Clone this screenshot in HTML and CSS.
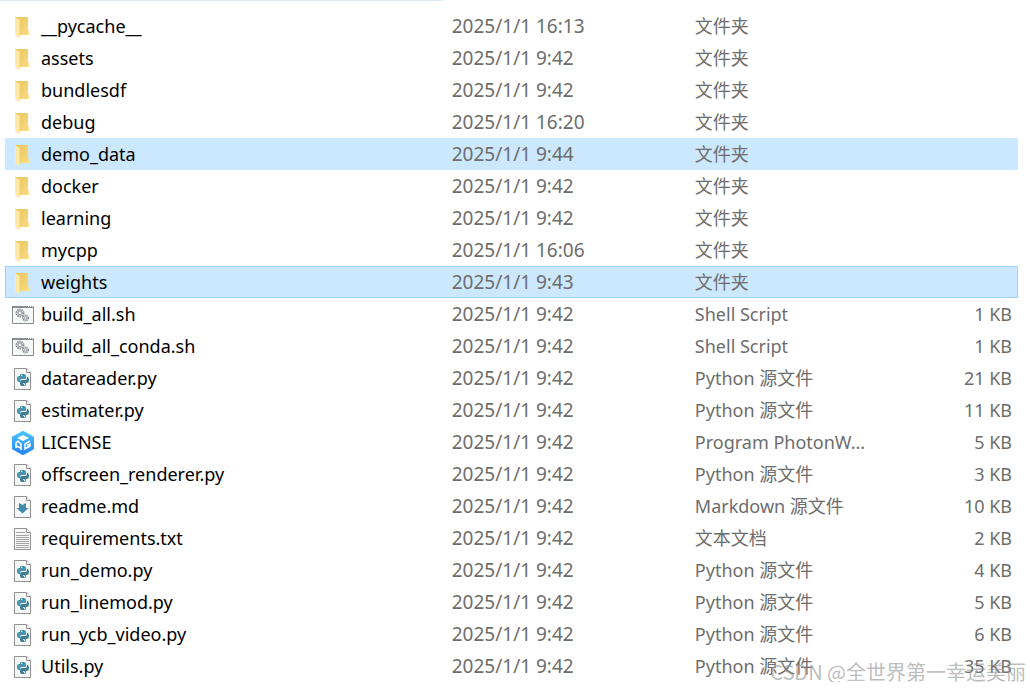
FILE: index.html
```html
<!DOCTYPE html>
<html lang="zh-CN">
<head>
    <meta charset="UTF-8">
    <meta name="viewport" content="width=device-width, initial-scale=1.0">
    <title>文件列表</title>
    <link rel="stylesheet" href="styles.css">
</head>
<body>
    <!-- icon set, every symbol on a 24px grid -->
    <svg class="icon-defs" aria-hidden="true">
        <defs>
            <linearGradient id="folderBack" x1="0" y1="0" x2="1" y2="1">
                <stop offset="0" stop-color="#e9c25c"/>
                <stop offset="1" stop-color="#fbdc82"/>
            </linearGradient>
            <linearGradient id="hexBlue" x1="0" y1="0" x2="0" y2="1">
                <stop offset="0" stop-color="#45c3ff"/>
                <stop offset="1" stop-color="#2b86f5"/>
            </linearGradient>
        </defs>
        <symbol id="folder" viewBox="0 0 24 24">
            <path fill="url(#folderBack)" d="M4 2h13v13l1 1v4H7z"/>
            <path fill="#ffe9a6" d="M4 2l5 3v15l-1 3-4-3z"/>
            <path fill="#f9dc8c" d="M8 5h1v15l-1 3z"/>
        </symbol>
        <symbol id="page" viewBox="0 0 24 24">
            <path fill="#f7f7f7" stroke="#919191" d="M3.500 1.500h12l4 4v17h-16z"/>
            <path fill="#fff" stroke="#919191" d="M15.500 1.500v4h4"/>
        </symbol>
        <symbol id="python" viewBox="0 0 24 24">
            <use href="#page"/>
            <path fill="#4b93b0" d="M9 9V8q0-1 1-1h3q2 0 2 2v2q0 1-1 1h-3q-2 0-2 2v1H8q-2 0-2-2v-2q0-2 2-2h4V9z"/>
            <path fill="#3e7f9c" d="M15 16v1q0 2-2 2h-2q-2 0-2-2v-2q0-2 2-2h3q2 0 2-2v-1q2 0 2 3 0 3-2 3h-4v1z"/>
            <path fill="#fff" d="M10 8h1v1h-1zM13 17h1v1h-1z"/>
        </symbol>
        <symbol id="markdown" viewBox="0 0 24 24">
            <use href="#page"/>
            <path fill="#4389aa" d="M8 8l3.500 2L15 8v5h2.500l-6 5.500-6-5.500H8z"/>
        </symbol>
        <symbol id="text" viewBox="0 0 24 24">
            <use href="#page"/>
            <path stroke="#a3a3a3" d="M5 5.500h9M5 8.500h13M5 10.500h13M5 12.500h13M5 14.500h13M5 16.500h13M5 18.500h13M5 20.500h13"/>
        </symbol>
        <symbol id="shell" viewBox="0 0 24 24">
            <path fill="#f7f8f8" stroke="#868b8f" d="M1.500 3.500h21v17h-21z"/>
            <path fill="#868b8f" d="M1 3h22v2H1z"/>
            <path fill="#fff" d="M17 3h1v1h-1zM19 3h1v1h-1zM21 3h1v1h-1z"/>
            <circle cx="9" cy="10" r="3.500" fill="none" stroke="#8b9298" stroke-width="2" stroke-dasharray="1.500 .7"/>
            <circle cx="9" cy="10" r="2" fill="none" stroke="#8b9298"/>
            <circle cx="14.500" cy="15" r="2.700" fill="none" stroke="#8b9298" stroke-width="1.700" stroke-dasharray="1.300 .6"/>
            <circle cx="14.500" cy="15" r="1.300" fill="none" stroke="#9ba1a6"/>
        </symbol>
        <symbol id="hex" viewBox="0 0 24 24">
            <path fill="url(#hexBlue)" stroke="url(#hexBlue)" stroke-width="2" stroke-linejoin="round" d="M12 1l10 5.500v11L12 23 2 17.500v-11z"/>
            <path fill="#fff" d="M12 4l6 3-6 3-6-3z"/>
            <path fill="none" stroke="#fff" stroke-width="1.500" d="M5 17v-5l2-2 3 3v6M5 15l5 2M19 10l-5 3v5l5-3v-2l-3 1.500"/>
        </symbol>
    </svg>

    <div class="column-edge"></div>
    <table class="file-list">
        <colgroup>
            <col class="col-name">
            <col class="col-date">
            <col class="col-type">
            <col class="col-size">
        </colgroup>
        <tbody>
            <tr><td class="name"><svg class="icon"><use href="#folder"/></svg>__pycache__</td><td class="date">2025/1/1 16:13</td><td>文件夹</td><td class="size"></td></tr>
            <tr><td class="name"><svg class="icon"><use href="#folder"/></svg>assets</td><td class="date">2025/1/1 9:42</td><td>文件夹</td><td class="size"></td></tr>
            <tr><td class="name"><svg class="icon"><use href="#folder"/></svg>bundlesdf</td><td class="date">2025/1/1 9:42</td><td>文件夹</td><td class="size"></td></tr>
            <tr><td class="name"><svg class="icon"><use href="#folder"/></svg>debug</td><td class="date">2025/1/1 16:20</td><td>文件夹</td><td class="size"></td></tr>
            <tr class="selected"><td class="name"><svg class="icon"><use href="#folder"/></svg>demo_data</td><td class="date">2025/1/1 9:44</td><td>文件夹</td><td class="size"></td></tr>
            <tr><td class="name"><svg class="icon"><use href="#folder"/></svg>docker</td><td class="date">2025/1/1 9:42</td><td>文件夹</td><td class="size"></td></tr>
            <tr><td class="name"><svg class="icon"><use href="#folder"/></svg>learning</td><td class="date">2025/1/1 9:42</td><td>文件夹</td><td class="size"></td></tr>
            <tr><td class="name"><svg class="icon"><use href="#folder"/></svg>mycpp</td><td class="date">2025/1/1 16:06</td><td>文件夹</td><td class="size"></td></tr>
            <tr class="selected focused"><td class="name"><svg class="icon"><use href="#folder"/></svg>weights</td><td class="date">2025/1/1 9:43</td><td>文件夹</td><td class="size"></td></tr>
            <tr><td class="name"><svg class="icon"><use href="#shell"/></svg>build_all.sh</td><td class="date">2025/1/1 9:42</td><td>Shell Script</td><td class="size">1 KB</td></tr>
            <tr><td class="name"><svg class="icon"><use href="#shell"/></svg>build_all_conda.sh</td><td class="date">2025/1/1 9:42</td><td>Shell Script</td><td class="size">1 KB</td></tr>
            <tr><td class="name"><svg class="icon"><use href="#python"/></svg>datareader.py</td><td class="date">2025/1/1 9:42</td><td>Python 源文件</td><td class="size">21 KB</td></tr>
            <tr><td class="name"><svg class="icon"><use href="#python"/></svg>estimater.py</td><td class="date">2025/1/1 9:42</td><td>Python 源文件</td><td class="size">11 KB</td></tr>
            <tr><td class="name"><svg class="icon"><use href="#hex"/></svg>LICENSE</td><td class="date">2025/1/1 9:42</td><td>Program PhotonW...</td><td class="size">5 KB</td></tr>
            <tr><td class="name"><svg class="icon"><use href="#python"/></svg>offscreen_renderer.py</td><td class="date">2025/1/1 9:42</td><td>Python 源文件</td><td class="size">3 KB</td></tr>
            <tr><td class="name"><svg class="icon"><use href="#markdown"/></svg>readme.md</td><td class="date">2025/1/1 9:42</td><td>Markdown 源文件</td><td class="size">10 KB</td></tr>
            <tr><td class="name"><svg class="icon"><use href="#text"/></svg>requirements.txt</td><td class="date">2025/1/1 9:42</td><td>文本文档</td><td class="size">2 KB</td></tr>
            <tr><td class="name"><svg class="icon"><use href="#python"/></svg>run_demo.py</td><td class="date">2025/1/1 9:42</td><td>Python 源文件</td><td class="size">4 KB</td></tr>
            <tr><td class="name"><svg class="icon"><use href="#python"/></svg>run_linemod.py</td><td class="date">2025/1/1 9:42</td><td>Python 源文件</td><td class="size">5 KB</td></tr>
            <tr><td class="name"><svg class="icon"><use href="#python"/></svg>run_ycb_video.py</td><td class="date">2025/1/1 9:42</td><td>Python 源文件</td><td class="size">6 KB</td></tr>
            <tr><td class="name"><svg class="icon"><use href="#python"/></svg>Utils.py</td><td class="date">2025/1/1 9:42</td><td>Python 源文件</td><td class="size">35 KB</td></tr>
        </tbody>
    </table>
    <div class="watermark">CSDN @全世界第一幸运美丽</div>
</body>
</html>
```
FILE: styles.css
```css
body {
    margin: 0;
    position: relative;
    background-color: #fff;
    color: #6d6d6d;
    font-family: "Noto Sans", "Noto Sans CJK SC", sans-serif;
    font-size: 18px;
    line-height: 32px;
}
.icon-defs {
    position: absolute;
    width: 0;
    height: 0;
}
.column-edge {
    width: 43%;
    height: 1px;
    margin-bottom: 9px;
    background-color: #d9ebf9;
}
.file-list {
    width: calc(100% - 17px);
    margin: 0 12px 0 5px;
    table-layout: fixed;
    border-collapse: collapse;
}
.col-name {
    width: 44%;
}
.col-date {
    width: 24%;
}
.col-type {
    width: 20%;
}
.col-size {
    width: 12%;
}
td {
    height: 32px;
    padding: 0 0 0 1px;
    white-space: nowrap;
}
.name {
    padding-left: 0;
    color: #000;
}
.icon {
    width: 24px;
    height: 24px;
    margin: 0 6px 3px;
    vertical-align: middle;
}
.date {
    font-size: 19px;
}
.size {
    padding-right: 6px;
    text-align: right;
}
.selected {
    background-color: #cce8ff;
}
.focused {
    outline: 1px solid #99d1ff;
    outline-offset: -1px;
}
.watermark {
    position: absolute;
    right: 4px;
    bottom: -6px;
    color: rgba(150, 150, 150, 0.65);
    font-family: "Noto Sans CJK SC", sans-serif;
    font-size: 20px;
}
```
